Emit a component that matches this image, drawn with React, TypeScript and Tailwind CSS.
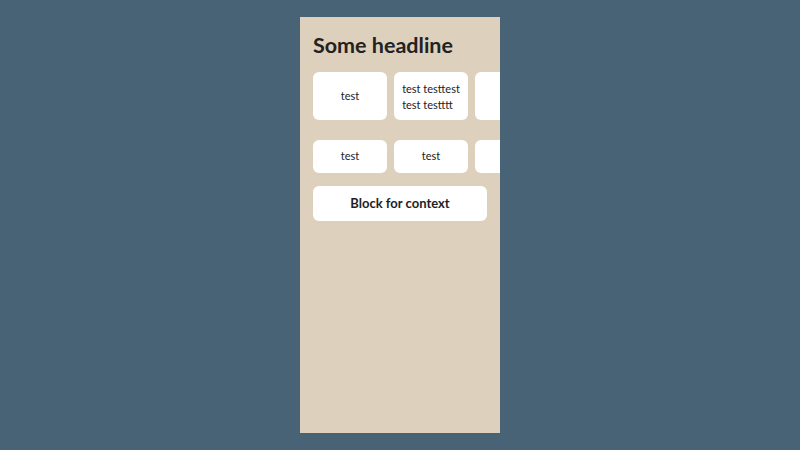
export default function App() {
  const font = { fontFamily: 'Lato, "Open Sans", sans-serif' };
  return (
    <div className="w-[800px] h-[450px] bg-[#486276] flex items-center justify-center" style={font}>
      <div className="w-[200px] h-[416px] bg-[#ddd0bc] flex flex-col pt-[15px] pl-[13px] overflow-hidden">
        <h1 className="text-[21.5px] leading-[27px] font-bold text-[#222]">Some headline</h1>
        <div className="mt-[13px] flex gap-[7px] overflow-x-hidden">
          <div className="shrink-0 w-[74px] h-[48px] bg-white rounded-[6px] flex items-center justify-center pt-px text-[11px] text-[#222]">test</div>
          <div className="shrink-0 w-[74px] h-[48px] bg-white rounded-[6px] flex items-center justify-center pt-[2px] text-[11px] leading-[16px] text-[#222]">
            <div>test testtest<br />test testttt</div>
          </div>
          <div className="shrink-0 w-[74px] h-[48px] bg-white rounded-[6px]" />
        </div>
        <div className="mt-[20px] flex gap-[7px] overflow-x-hidden">
          <div className="shrink-0 w-[74px] h-[33px] bg-white rounded-[6px] flex items-center justify-center text-[11px] text-[#222]">test</div>
          <div className="shrink-0 w-[74px] h-[33px] bg-white rounded-[6px] flex items-center justify-center text-[11px] text-[#222]">test</div>
          <div className="shrink-0 w-[74px] h-[33px] bg-white rounded-[6px]" />
        </div>
        <div className="mt-[13px] w-[174px] h-[35px] bg-white rounded-[6px] flex items-center justify-center text-[13px] font-bold text-[#1e1e24]">Block for context</div>
      </div>
    </div>
  );
}
